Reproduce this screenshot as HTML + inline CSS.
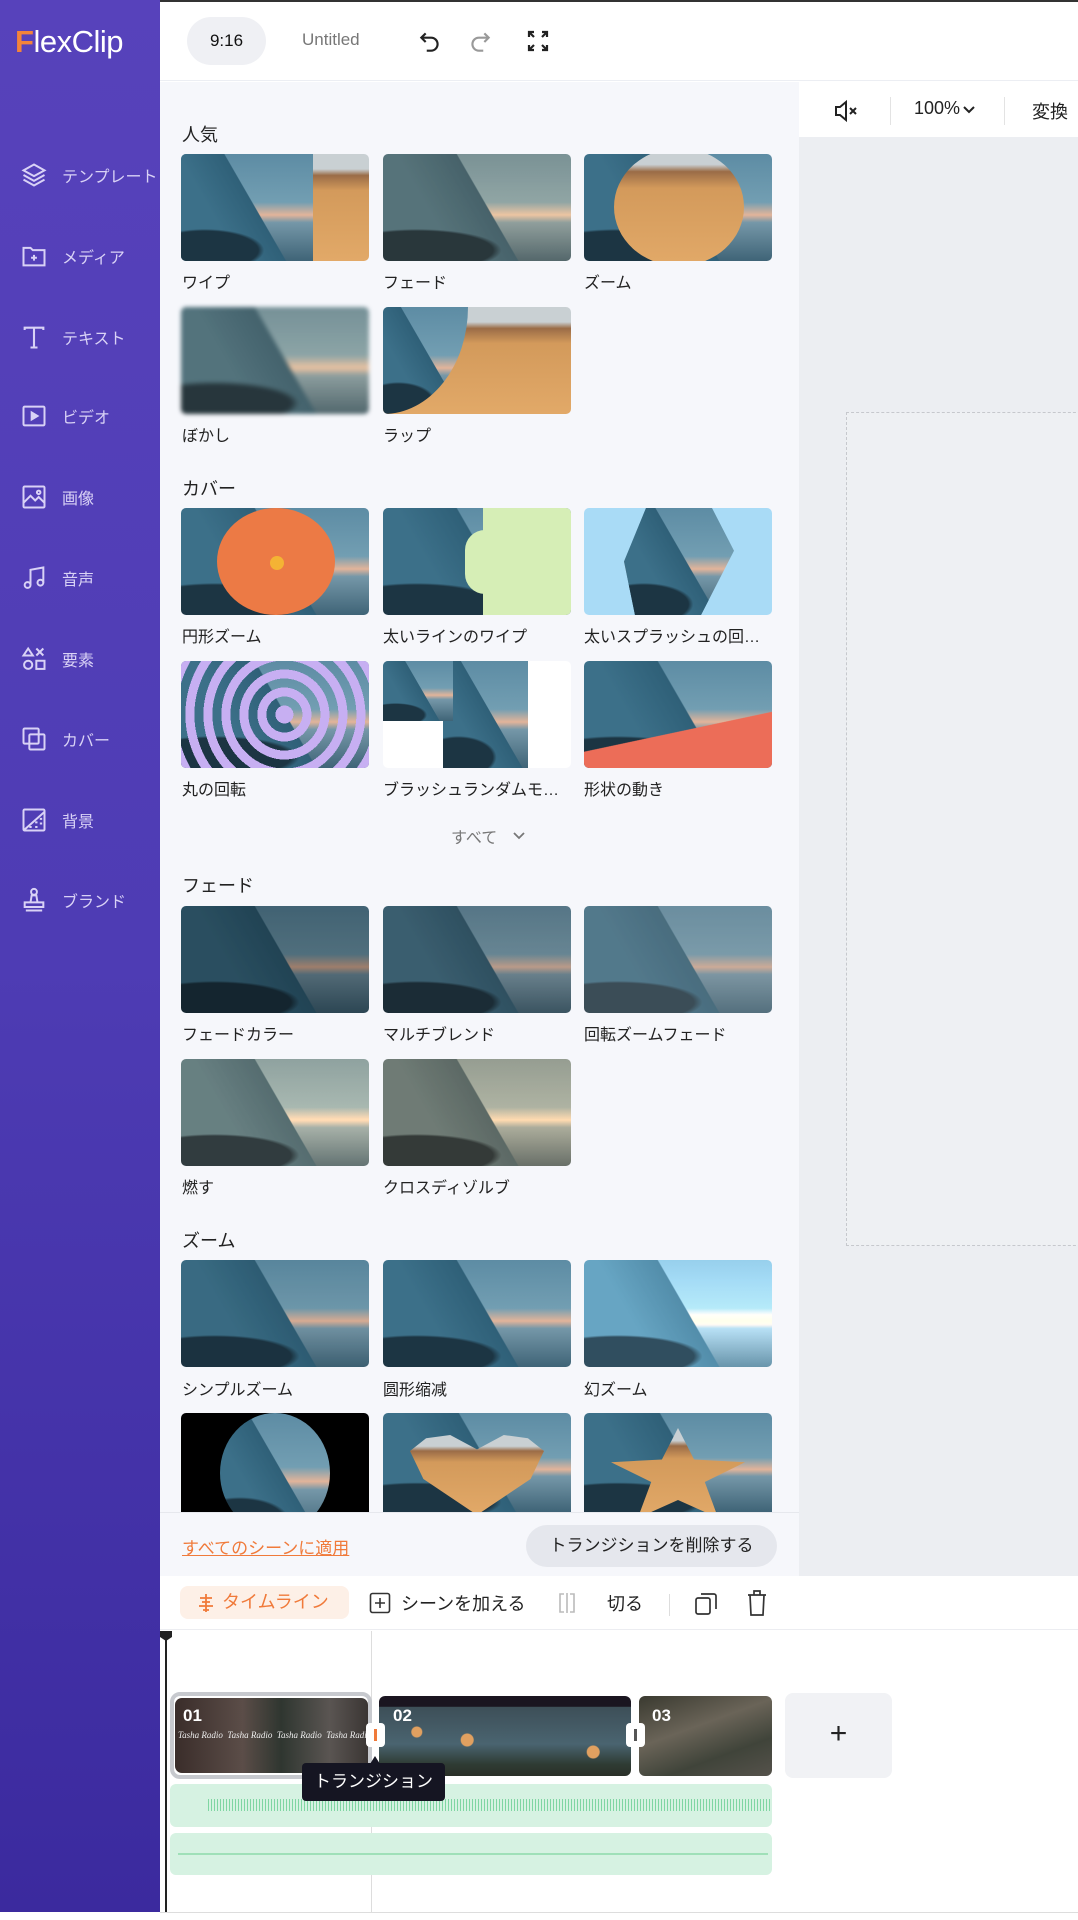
<!DOCTYPE html>
<html><head><meta charset="utf-8"><style>
*{margin:0;padding:0;box-sizing:border-box}
body{width:1078px;height:1920px;position:relative;overflow:hidden;background:#fff;font-family:"Liberation Sans","Noto Sans CJK JP",sans-serif;color:#222}
.a{position:absolute}
#side{left:0;top:0;width:160px;height:1912px;background:linear-gradient(180deg,#5742bb 0%,#4e3cb4 50%,#3b2a9e 100%)}
.nav{position:absolute;left:20px;width:140px;height:30px;color:#d9d2f6;font-size:16px;display:flex;align-items:center;white-space:nowrap;overflow:hidden}
.nav svg{width:28px;height:28px;margin-right:14px;flex:none}
.land{background:
 radial-gradient(ellipse 45% 20% at 18% 90%,#1c3543 0 90%,transparent 100%),
 linear-gradient(60deg,#3c7089 0 30%,#2f6078 54%,transparent 54.5%),
 linear-gradient(180deg,#5d8ca4 0,#729eb2 45%,#e2b49a 57%,#7597a8 64%,#3f6477 100%)}
.sand{background:linear-gradient(180deg,#c9d0d3 0 14%,#9a6c47 20%,#d39a5b 34%,#e2a968 100%)}
.th{position:absolute;width:188px;height:107px;border-radius:5px;overflow:hidden}
.lb{position:absolute;font-size:16px;color:#222;white-space:nowrap}
.sec{position:absolute;left:182px;font-size:18px;color:#222}
</style></head><body>
<div class="a" style="left:0;top:0;width:1078px;height:2px;background:#333"></div>
<div class="a" id="side"></div>
<div class="a" style="left:15px;top:24px;font-size:31px;color:#fff;letter-spacing:-0.5px"><span style="color:#f2833b;font-weight:bold">F</span>lexClip</div>
<div class="nav" style="top:160px"><svg viewBox="0 0 24 24" fill="none" stroke="#d9d2f6" stroke-width="1.7"><path d="M12 3l9 5-9 5-9-5z"/><path d="M3 12l9 5 9-5"/><path d="M3 16l9 5 9-5"/></svg>テンプレート</div>
<div class="nav" style="top:241px"><svg viewBox="0 0 24 24" fill="none" stroke="#d9d2f6" stroke-width="1.7"><path d="M3 5h6l2 2h10v13H3z"/><path d="M12 11v5M9.5 13.5h5"/></svg>メディア</div>
<div class="nav" style="top:322px"><svg viewBox="0 0 24 24" fill="none" stroke="#d9d2f6" stroke-width="1.8"><path d="M4 6V4h16v2M12 4v17M9 21h6"/></svg>テキスト</div>
<div class="nav" style="top:401px"><svg viewBox="0 0 24 24" fill="none" stroke="#d9d2f6" stroke-width="1.7"><rect x="3" y="4" width="18" height="16" rx="1"/><path d="M10 9l5 3-5 3z" fill="#d9d2f6"/></svg>ビデオ</div>
<div class="nav" style="top:482px"><svg viewBox="0 0 24 24" fill="none" stroke="#d9d2f6" stroke-width="1.7"><rect x="3" y="3" width="18" height="18" rx="1"/><path d="M3 17l6-6 4 4 3-3 5 5"/><circle cx="16" cy="8" r="1.5"/></svg>画像</div>
<div class="nav" style="top:563px"><svg viewBox="0 0 24 24" fill="none" stroke="#d9d2f6" stroke-width="1.7"><path d="M9 18V5l11-2v13"/><circle cx="6.5" cy="18" r="2.5"/><circle cx="17.5" cy="16" r="2.5"/></svg>音声</div>
<div class="nav" style="top:644px"><svg viewBox="0 0 24 24" fill="none" stroke="#d9d2f6" stroke-width="1.7"><path d="M7 3l4 6H3z"/><path d="M14 3l6 6M20 3l-6 6"/><circle cx="7" cy="17" r="3.5"/><rect x="14" y="13.5" width="7" height="7"/></svg>要素</div>
<div class="nav" style="top:724px"><svg viewBox="0 0 24 24" fill="none" stroke="#d9d2f6" stroke-width="1.7"><rect x="3" y="3" width="13" height="13" rx="1"/><rect x="8" y="8" width="13" height="13" rx="1"/></svg>カバー</div>
<div class="nav" style="top:805px"><svg viewBox="0 0 24 24" fill="none" stroke="#d9d2f6" stroke-width="1.7"><rect x="3" y="3" width="18" height="18" rx="1"/><path d="M3 21L21 5M8 18h2M13 14h2M13 18h2M17 11h2M17 15h2"/></svg>背景</div>
<div class="nav" style="top:885px"><svg viewBox="0 0 24 24" fill="none" stroke="#d9d2f6" stroke-width="1.7"><circle cx="12" cy="5" r="2.5"/><path d="M10 8h4l1 6H9zM4 14h16v4H4zM5 21h14"/></svg>ブランド</div>

<div class="a" style="left:160px;top:2px;width:918px;height:79px;background:#fff;border-bottom:1px solid #eceef3"></div>
<div class="a" style="left:187px;top:17px;width:79px;height:48px;border-radius:24px;background:#eff0f4;font-size:17px;line-height:48px;text-align:center;color:#111">9:16</div>
<div class="a" style="left:302px;top:30px;font-size:17px;color:#777">Untitled</div>
<svg class="a" style="left:417px;top:28px" width="26" height="28" viewBox="0 0 24 24" fill="none" stroke="#222" stroke-width="2"><path d="M8 4L4 8l4 4"/><path d="M4 8h9a6 6 0 010 12H9"/></svg>
<svg class="a" style="left:467px;top:28px" width="26" height="28" viewBox="0 0 24 24" fill="none" stroke="#999" stroke-width="2"><path d="M16 4l4 4-4 4"/><path d="M20 8h-9a6 6 0 000 12h4"/></svg>
<svg class="a" style="left:526px;top:29px" width="24" height="24" viewBox="0 0 24 24" fill="none" stroke="#222" stroke-width="2.2"><path d="M3 8V3h5M3 3l5 5M21 8V3h-5M21 3l-5 5M3 16v5h5M3 21l5-5M21 16v5h-5M21 21l-5-5"/></svg>

<div class="a" style="left:160px;top:82px;width:639px;height:1494px;background:#f6f7fb"></div>
<div class="a" style="left:799px;top:773px;width:18px;height:115px;background:#f6f7fb;border-radius:0 8px 8px 0"></div>
<svg class="a" style="left:801px;top:822px" width="12" height="16" viewBox="0 0 12 16" fill="none" stroke="#555" stroke-width="1.6"><path d="M8 3L4 8l4 5"/></svg>
<div class="a" style="left:799px;top:82px;width:279px;height:55px;background:#fff"></div>
<div class="a" style="left:799px;top:137px;width:279px;height:1439px;background:#eceef2"></div>
<div class="a" style="left:846px;top:412px;width:240px;height:834px;border:1px dashed #c6c8cd;background:#eef0f3"></div>
<svg class="a" style="left:832px;top:97px" width="28" height="28" viewBox="0 0 28 28" fill="none" stroke="#222" stroke-width="2"><path d="M4 10h4l6-5v18l-6-5H4z"/><path d="M18 11l6 6M24 11l-6 6"/></svg>
<div class="a" style="left:890px;top:97px;width:1px;height:28px;background:#e3e3e3"></div>
<div class="a" style="left:914px;top:98px;font-size:18px;color:#222">100%</div>
<svg class="a" style="left:962px;top:103px" width="14" height="14" viewBox="0 0 14 14" fill="none" stroke="#222" stroke-width="2"><path d="M2 4l5 5 5-5"/></svg>
<div class="a" style="left:1004px;top:97px;width:1px;height:28px;background:#e3e3e3"></div>
<div class="a" style="left:1032px;top:98px;font-size:18px;color:#222">変換</div>

<div class="sec" style="top:121px">人気</div>
<div class="th" style="left:181px;top:154px"><div class="land" style="position:absolute;inset:0;right:30%"></div><div class="sand" style="position:absolute;inset:0;left:70%"></div></div>
<div class="th land" style="left:383px;top:154px;filter:sepia(.35)"></div>
<div class="th land" style="left:584px;top:154px"><div class="sand" style="position:absolute;left:30px;top:-6px;width:130px;height:118px;border-radius:50%"></div></div>
<div class="lb" style="left:182px;top:269px">ワイプ</div><div class="lb" style="left:383px;top:269px">フェード</div><div class="lb" style="left:584px;top:269px">ズーム</div>
<div class="th land" style="left:181px;top:307px;filter:blur(2px) sepia(.3)"></div>
<div class="th" style="left:383px;top:307px"><div class="sand" style="position:absolute;inset:0"></div><div class="land" style="position:absolute;left:0;top:0;width:45%;height:100%;border-radius:0 0 100% 0/0 0 100% 0"></div></div>
<div class="lb" style="left:182px;top:422px">ぼかし</div><div class="lb" style="left:383px;top:422px">ラップ</div>

<div class="sec" style="top:475px">カバー</div>
<div class="th land" style="left:181px;top:508px"><div style="position:absolute;left:36px;top:0;width:118px;height:107px;border-radius:50%;background:#ec7a45"></div><div style="position:absolute;left:89px;top:48px;width:14px;height:14px;border-radius:50%;background:#f4b334"></div></div>
<div class="th land" style="left:383px;top:508px"><div style="position:absolute;left:100px;top:0;width:88px;height:107px;background:#d6eeb6"></div><div style="position:absolute;left:82px;top:22px;width:40px;height:64px;background:#d6eeb6;border-radius:20px"></div></div>
<div class="th" style="left:584px;top:508px;background:#a9dbf6"><div class="land" style="position:absolute;left:40px;top:0;width:110px;height:107px;clip-path:polygon(20% 0,80% 0,100% 40%,70% 100%,10% 100%,0 50%)"></div></div>
<div class="lb" style="left:182px;top:623px">円形ズーム</div><div class="lb" style="left:383px;top:623px">太いラインのワイプ</div><div class="lb" style="left:584px;top:623px">太いスプラッシュの回…</div>
<div class="th land" style="left:181px;top:661px"><div style="position:absolute;inset:0;background:repeating-radial-gradient(circle at 55% 50%,#c7aff2 0 9px,transparent 9px 18px)"></div></div>
<div class="th" style="left:383px;top:661px;background:#fff"><div class="land" style="position:absolute;left:60px;top:0;width:85px;height:107px"></div><div class="land" style="position:absolute;left:0;top:0;width:70px;height:60px"></div></div>
<div class="th land" style="left:584px;top:661px"><div style="position:absolute;inset:0;background:linear-gradient(-12deg,#ec6d58 0 38%,transparent 38.5%)"></div></div>
<div class="lb" style="left:182px;top:776px">丸の回転</div><div class="lb" style="left:383px;top:776px">ブラッシュランダムモ…</div><div class="lb" style="left:584px;top:776px">形状の動き</div>
<div class="a" style="left:451px;top:824px;font-size:16px;color:#777">すべて</div>
<svg class="a" style="left:512px;top:830px" width="14" height="12" viewBox="0 0 14 12" fill="none" stroke="#777" stroke-width="1.8"><path d="M2 3l5 5 5-5"/></svg>

<div class="sec" style="top:872px">フェード</div>
<div class="th land" style="left:181px;top:906px;filter:brightness(.7)"></div>
<div class="th land" style="left:383px;top:906px;filter:brightness(.85) saturate(.8)"></div>
<div class="th land" style="left:584px;top:906px;filter:brightness(1.05) contrast(.7)"></div>
<div class="lb" style="left:182px;top:1021px">フェードカラー</div><div class="lb" style="left:383px;top:1021px">マルチブレンド</div><div class="lb" style="left:584px;top:1021px">回転ズームフェード</div>
<div class="th land" style="left:181px;top:1059px;filter:sepia(.45) brightness(1.1)"></div>
<div class="th land" style="left:383px;top:1059px;filter:sepia(.6) brightness(1.05)"></div>
<div class="lb" style="left:182px;top:1174px">燃す</div><div class="lb" style="left:383px;top:1174px">クロスディゾルブ</div>

<div class="sec" style="top:1227px">ズーム</div>
<div class="th land" style="left:181px;top:1260px;filter:brightness(.95)"></div>
<div class="th land" style="left:383px;top:1260px"></div>
<div class="th land" style="left:584px;top:1260px;filter:brightness(1.5) saturate(.8)"></div>
<div class="lb" style="left:182px;top:1376px">シンプルズーム</div><div class="lb" style="left:383px;top:1376px">圆形缩减</div><div class="lb" style="left:584px;top:1376px">幻ズーム</div>
<div class="th" style="left:181px;top:1413px;height:99px;border-radius:5px 5px 0 0;background:#000"><div class="land" style="position:absolute;left:39px;top:0;width:110px;height:120px;border-radius:50%"></div></div>
<div class="th land" style="left:383px;top:1413px;height:99px;border-radius:5px 5px 0 0"><div class="sand" style="position:absolute;left:27px;top:22px;width:134px;height:80px;clip-path:polygon(0 20%,12% 4%,30% 0,50% 18%,70% 0,88% 4%,100% 20%,90% 55%,50% 100%,10% 55%)"></div></div>
<div class="th land" style="left:584px;top:1413px;height:99px;border-radius:5px 5px 0 0"><div class="sand" style="position:absolute;left:27px;top:15px;width:134px;height:90px;clip-path:polygon(50% 0,62% 35%,100% 38%,70% 60%,80% 100%,50% 80%,20% 100%,30% 60%,0 38%,38% 35%)"></div></div>
<div class="a" style="left:160px;top:1512px;width:639px;height:64px;background:#f6f7fb;border-top:1px solid #e6e8ed"></div>
<div class="a" style="left:182px;top:1534px;font-size:17px;color:#f07a3a;text-decoration:underline">すべてのシーンに適用</div>
<div class="a" style="left:526px;top:1525px;width:251px;height:42px;border-radius:21px;background:#e5e7ed;font-size:17px;line-height:42px;text-align:center;color:#222">トランジションを削除する</div>

<div class="a" style="left:160px;top:1576px;width:918px;height:54px;background:#fff;border-bottom:1px solid #ecedf1"></div>
<div class="a" style="left:180px;top:1586px;width:169px;height:33px;border-radius:8px;background:#fdf0e7;color:#f07a3a;font-size:18px;line-height:33px;padding-left:42px">タイムライン</div>
<svg class="a" style="left:196px;top:1592px" width="20" height="22" viewBox="0 0 20 22" fill="none" stroke="#f07a3a" stroke-width="1.8"><path d="M10 2v18M4 6h12M6 10h8M3 14h14M7 18h6"/></svg>
<svg class="a" style="left:369px;top:1592px" width="22" height="22" viewBox="0 0 22 22" fill="none" stroke="#333" stroke-width="1.6"><rect x="1.5" y="1.5" width="19" height="19" rx="2"/><path d="M11 6v10M6 11h10"/></svg>
<div class="a" style="left:401px;top:1590px;font-size:18px;color:#222">シーンを加える</div>
<svg class="a" style="left:556px;top:1592px" width="22" height="22" viewBox="0 0 22 22" fill="none" stroke="#bbb" stroke-width="1.6"><path d="M8 2H4v18h4M14 2h4v18h-4M11 1v20"/></svg>
<div class="a" style="left:607px;top:1590px;font-size:18px;color:#222">切る</div>
<div class="a" style="left:669px;top:1594px;width:1px;height:22px;background:#ddd"></div>
<svg class="a" style="left:693px;top:1590px" width="26" height="26" viewBox="0 0 26 26" fill="none" stroke="#333" stroke-width="1.7"><rect x="3" y="8" width="14" height="16" rx="2"/><path d="M8 4h13a2 2 0 012 2v13"/></svg>
<svg class="a" style="left:746px;top:1589px" width="22" height="28" viewBox="0 0 22 28" fill="none" stroke="#333" stroke-width="1.7"><path d="M2 6h18M8 6V2h6v4M4 6l1 20h12l1-20"/></svg>

<div class="a" style="left:371px;top:1631px;width:1px;height:281px;background:#ddd"></div>
<div class="a" style="left:165px;top:1631px;width:2px;height:281px;background:#222"></div>
<div class="a" style="left:160px;top:1631px;width:12px;height:10px;background:#222;clip-path:polygon(0 0,100% 0,100% 60%,50% 100%,0 60%)"></div>
<div class="a" style="left:170px;top:1692px;width:202px;height:87px;border:4px solid #c7c9ce;border-radius:10px"></div>
<div class="a" style="left:175px;top:1698px;width:193px;height:75px;border-radius:7px;background:linear-gradient(90deg,#3a2d2a,#5b4d48 35%,#2f3630 55%,#5a5552 80%,#3b3634);"></div>
<div class="a" style="left:183px;top:1706px;font-size:17px;font-weight:bold;color:#fff">01</div>
<div class="a" style="left:178px;top:1730px;font-size:9px;color:#eee;font-style:italic;font-family:'Liberation Serif',serif;white-space:nowrap">Tasha Radio &nbsp;Tasha Radio &nbsp;Tasha Radio &nbsp;Tasha Radio</div>
<div class="a" style="left:379px;top:1696px;width:252px;height:80px;border-radius:6px;background:radial-gradient(circle at 15% 45%,#e0a060 0 5px,transparent 6px),radial-gradient(circle at 35% 55%,#e0a060 0 6px,transparent 7px),radial-gradient(circle at 85% 70%,#e0a060 0 6px,transparent 7px),linear-gradient(180deg,#1a1520 0 13%,#3d4f58 14%,#4a6470 60%,#2f3c34 85%,#2a3028)"></div>
<div class="a" style="left:393px;top:1706px;font-size:17px;font-weight:bold;color:#fff">02</div>
<div class="a" style="left:639px;top:1696px;width:133px;height:80px;border-radius:6px;background:linear-gradient(160deg,#3a3a30,#6a6458 40%,#40443a 70%,#55524b)"></div>
<div class="a" style="left:652px;top:1706px;font-size:17px;font-weight:bold;color:#fff">03</div>
<div class="a" style="left:366px;top:1723px;width:19px;height:24px;border-radius:4px;background:#fff"><div style="margin:6px auto;width:3px;height:12px;background:#f07a3a"></div></div>
<div class="a" style="left:626px;top:1723px;width:19px;height:24px;border-radius:4px;background:#fff"><div style="margin:6px auto;width:3px;height:12px;background:#555"></div></div>
<div class="a" style="left:785px;top:1693px;width:107px;height:85px;border-radius:8px;background:#f1f2f5;font-size:30px;line-height:82px;text-align:center;color:#222">+</div>
<div class="a" style="left:170px;top:1784px;width:602px;height:43px;border-radius:6px;background:#d6f2e2"></div>
<div class="a" style="left:208px;top:1799px;width:564px;height:12px;background:repeating-linear-gradient(90deg,#7fd6a2 0 1px,transparent 1px 3px)"></div>
<div class="a" style="left:170px;top:1833px;width:602px;height:42px;border-radius:6px;background:#d6f2e2"></div>
<div class="a" style="left:178px;top:1853px;width:590px;height:2px;background:#9fe0b8"></div>
<div class="a" style="left:370px;top:1756px;width:10px;height:8px;background:#151522;clip-path:polygon(50% 0,100% 100%,0 100%)"></div>
<div class="a" style="left:302px;top:1763px;width:143px;height:38px;border-radius:4px;background:#151522;color:#fff;font-size:17px;line-height:38px;text-align:center">トランジション</div>
<div class="a" style="left:160px;top:1912px;width:918px;height:8px;background:#fff;border-top:1px solid #ddd"></div>
</body></html>
